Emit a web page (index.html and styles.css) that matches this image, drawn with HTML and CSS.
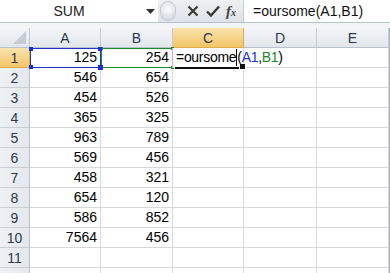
FILE: index.html
```html
<!DOCTYPE html>
<html>
<head>
<meta charset="utf-8">
<link rel="stylesheet" href="styles.css">
</head>
<body>
<div class="app">
  <div class="fbar">
    <div class="namebox">
      <span class="name">SUM</span>
      <svg class="dd" width="9" height="5" viewBox="0 0 9 5"><path d="M0 0h9L4.5 5z" fill="#333"/></svg>
    </div>
    <div class="tools">
      <span class="grip"></span>
      <svg class="ico" width="12" height="12" viewBox="0 0 12 12"><path d="M1.5 1.5l9 9M10.5 1.5l-9 9" stroke="#3a3a3a" stroke-width="2.2"/></svg>
      <svg class="ico" width="14" height="12" viewBox="0 0 14 12"><path d="M1 6.5l4 4L13 1.5" stroke="#3a3a3a" stroke-width="2.4" fill="none"/></svg>
      <span class="fx"><i>f</i><small>x</small></span>
    </div>
    <div class="input">=oursome(A1,B1)</div>
  </div>
  <div class="gap"></div>
  <div class="sheet">
    <div class="hd corner"><span class="tri"></span></div>
    <div class="hd">A</div>
    <div class="hd">B</div>
    <div class="hd sel">C</div>
    <div class="hd">D</div>
    <div class="hd">E</div>

    <div class="rh sel">1</div>
    <div class="c n refa">125<i class="q tl"></i><i class="q tr"></i><i class="q bl"></i><i class="q br"></i></div>
    <div class="c n refb">254<i class="q tl"></i><i class="q tr"></i><i class="q bl"></i><i class="q br"></i></div>
    <div class="c active"><span class="ftxt">=oursome<span class="caret"></span>(<span class="ra">A1</span>,<span class="rb">B1</span>)</span><i class="fill"></i></div>
    <div class="c"></div>
    <div class="c"></div>

    <div class="rh">2</div><div class="c n">546</div><div class="c n">654</div><div class="c"></div><div class="c"></div><div class="c"></div>
    <div class="rh">3</div><div class="c n">454</div><div class="c n">526</div><div class="c"></div><div class="c"></div><div class="c"></div>
    <div class="rh">4</div><div class="c n">365</div><div class="c n">325</div><div class="c"></div><div class="c"></div><div class="c"></div>
    <div class="rh">5</div><div class="c n">963</div><div class="c n">789</div><div class="c"></div><div class="c"></div><div class="c"></div>
    <div class="rh">6</div><div class="c n">569</div><div class="c n">456</div><div class="c"></div><div class="c"></div><div class="c"></div>
    <div class="rh">7</div><div class="c n">458</div><div class="c n">321</div><div class="c"></div><div class="c"></div><div class="c"></div>
    <div class="rh">8</div><div class="c n">654</div><div class="c n">120</div><div class="c"></div><div class="c"></div><div class="c"></div>
    <div class="rh">9</div><div class="c n">586</div><div class="c n">852</div><div class="c"></div><div class="c"></div><div class="c"></div>
    <div class="rh">10</div><div class="c n">7564</div><div class="c n">456</div><div class="c"></div><div class="c"></div><div class="c"></div>
    <div class="rh">11</div><div class="c"></div><div class="c"></div><div class="c"></div><div class="c"></div><div class="c"></div>
    <div class="rh"></div><div class="c"></div><div class="c"></div><div class="c"></div><div class="c"></div><div class="c"></div>
  </div>
</div>
</body>
</html>
```
FILE: styles.css
```css
html, body {
  margin: 0;
  padding: 0;
  background: #ffffff;
}
.app {
  width: 390px;
  height: 273px;
  overflow: hidden;
  font-family: "Liberation Sans", Arial, sans-serif;
  font-size: 14px;
  color: #000;
}
.fbar {
  display: flex;
  height: 22px;
  background: #e3e7ec;
  border-bottom: 1px solid #b8c0cb;
}
.namebox {
  width: 158px;
  background: #fff;
  display: flex;
  align-items: center;
  position: relative;
}
.name {
  flex: 1;
  text-align: center;
  padding-left: 0;
  margin-right: 8px;
  color: #222;
  font-size: 14px;
}
.dd {
  margin-right: 3px;
}
.tools {
  width: 85px;
  display: flex;
  align-items: center;
  background: linear-gradient(#eef0f3, #dfe3e8);
  border-right: 1px solid #c3c9d1;
}
.grip {
  width: 14px;
  height: 18px;
  border-radius: 9px;
  margin-left: 2px;
  background: radial-gradient(circle at 50% 40%, #ffffff 0, #e8ebef 40%, #cdd2d9 100%);
  border: 1px solid #c8cdd4;
}
.ico {
  margin-left: 11px;
}
.tools .ico + .ico {
  margin-left: 7px;
}
.fx {
  margin-left: 6px;
  font-family: "Liberation Serif", serif;
  font-weight: bold;
  color: #444;
  font-size: 15px;
}
.fx small {
  font-size: 10px;
  font-style: italic;
}
.input {
  flex: 1;
  background: #fff;
  padding-left: 9px;
  line-height: 22px;
  font-size: 14px;
  color: #111;
}
.gap {
  height: 5px;
  background: #f2f4f6;
}
.sheet {
  display: grid;
  grid-template-columns: 30px 71px 72px 71px 73px 72px;
  grid-auto-rows: 20px;
  width: 389px;
  border-right: 1px solid #b0b6be;
}
.hd {
  background: linear-gradient(#f3f5f8, #e2e6eb);
  border-right: 1px solid #c4cad2;
  border-bottom: 1px solid #b9c2cd;
  box-sizing: border-box;
  text-align: center;
  line-height: 20px;
  color: #2d3a4a;
  font-size: 14px;
}
.hd.corner {
  position: relative;
}
.tri {
  position: absolute;
  right: 3px;
  bottom: 3px;
  width: 0;
  height: 0;
  border-left: 13px solid transparent;
  border-bottom: 13px solid #c7ccd3;
}
.hd.sel, .rh.sel {
  background: linear-gradient(#fbe3ae, #f2c667);
  border-color: #e2ad4a;
}
.rh {
  background: linear-gradient(90deg, #eef1f4, #e4e8ed);
  border-right: 1px solid #b9c2cd;
  border-bottom: 1px solid #c9ced5;
  box-sizing: border-box;
  text-align: center;
  line-height: 20px;
  color: #2d3a4a;
  font-size: 14px;
}
.c {
  border-right: 1px solid #d8d8d8;
  border-bottom: 1px solid #d8d8d8;
  box-sizing: border-box;
  line-height: 19px;
  position: relative;
  background: #fff;
}
.n {
  text-align: right;
  padding-right: 3px;
}
.refa {
  outline: 1px solid #2233cc;
  outline-offset: -1px;
  z-index: 2;
}
.refb {
  outline: 1px solid #1b8a2a;
  outline-offset: -1px;
  z-index: 1;
}
.q {
  position: absolute;
  width: 4px;
  height: 4px;
}
.refa .q { background: #1a2fd0; }
.refb .q { background: #1b8a2a; width: 3px; height: 3px; }
.q.tl { left: -1px; top: -1px; }
.q.tr { right: -2px; top: -1px; }
.q.bl { left: -1px; bottom: -2px; }
.q.br { right: -2px; bottom: -2px; }
.refa .q.br { width: 5px; height: 5px; right: -3px; bottom: -3px; }
.active {
  z-index: 3;
  border-left: 1px solid #e3a3d8;
  margin-left: -1px;
  overflow: visible;
  white-space: nowrap;
}
.active::after {
  content: "";
  position: absolute;
  left: 2px;
  right: -2px;
  bottom: -2px;
  height: 2px;
  background: #111;
}
.fill {
  position: absolute;
  right: -3px;
  bottom: -3px;
  width: 5px;
  height: 5px;
  background: #111;
  border: 1px solid #fff;
  z-index: 4;
}
.ftxt {
  padding-left: 3px;
  position: relative;
  z-index: 5;
  letter-spacing: -0.3px;
}
.caret {
  display: inline-block;
  width: 1px;
  height: 17px;
  background: #000;
  vertical-align: -4px;
}
.ra { color: #2233cc; }
.rb { color: #1b8a2a; }
```
